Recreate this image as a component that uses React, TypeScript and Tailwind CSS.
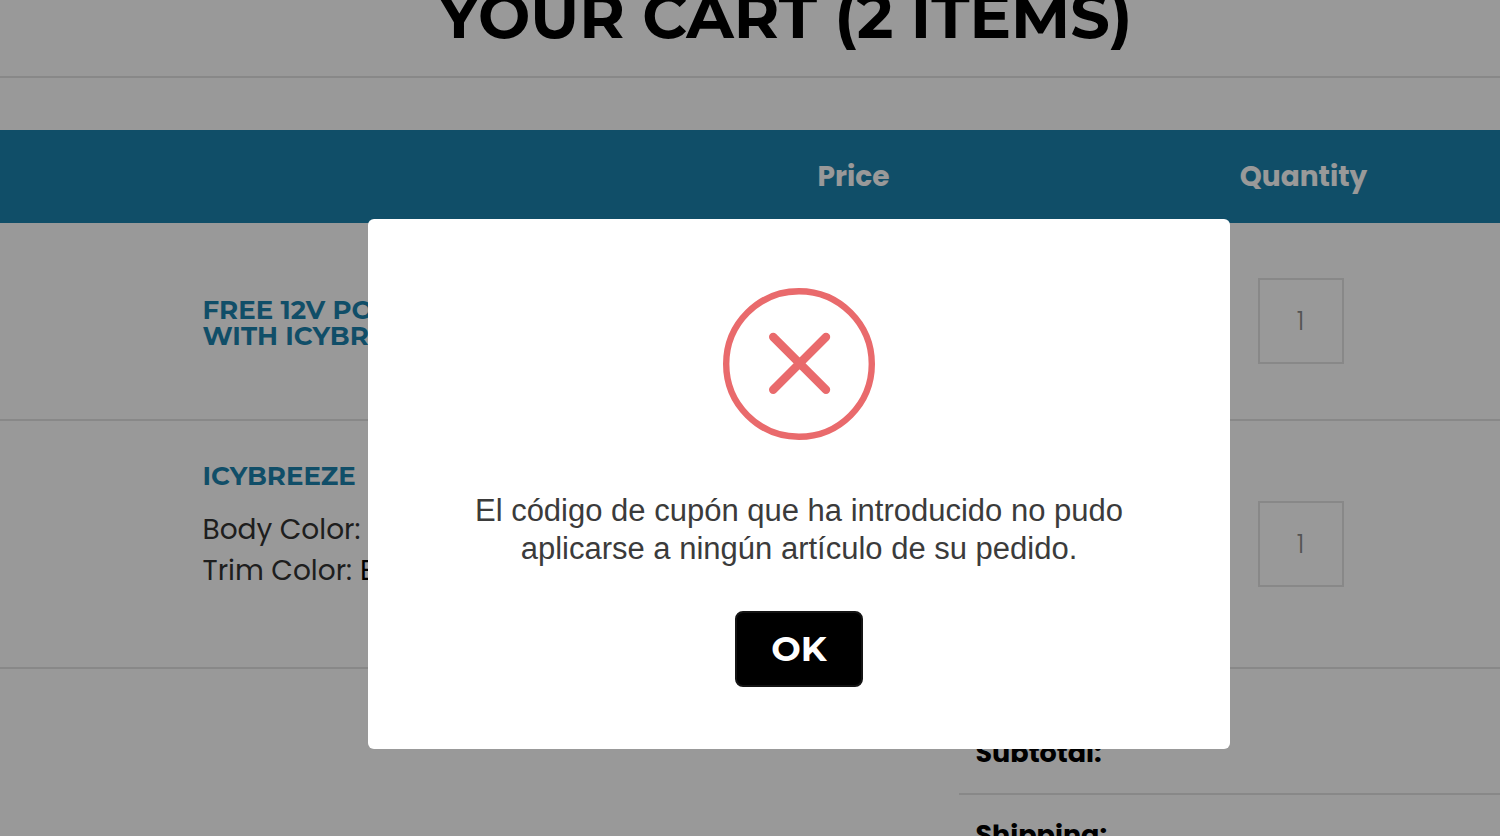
const HEADING = "font-['Montserrat','Inter',sans-serif]";
const BODY = "font-['Poppins','Inter',sans-serif]";

function QuantityBox({ id, label }: { id: string; label: string }) {
  return (
    <>
      <label htmlFor={id} className="sr-only">
        {label}
      </label>
      <input
        id={id}
        type="text"
        inputMode="numeric"
        defaultValue="1"
        className="mr-[6px] inline-block size-[86px] border-2 border-[#e3e3e3] bg-white text-center align-middle text-[26px] font-light text-[#8c8c8c]"
      />
    </>
  );
}

function ErrorIcon() {
  return (
    <svg viewBox="0 0 152 152" className="size-[152px]" fill="none" stroke="#e96a6c" aria-hidden="true">
      <circle cx="76" cy="76" r="72.8" strokeWidth="6.4" />
      <path d="M50.2 49 103 101.8M103 49 50.2 101.8" strokeWidth="8.4" strokeLinecap="round" />
    </svg>
  );
}

function CartTable() {
  return (
    <table className="w-full table-fixed border-collapse">
      <colgroup>
        <col className="w-[13.5%]" />
        <col className="w-[26.5%]" />
        <col className="w-[33.8%]" />
        <col />
      </colgroup>
      <thead>
        <tr className="h-[93px] bg-[#1b82ad] text-[28px] text-white">
          <td />
          <td />
          <th scope="col" className="font-bold">
            Price
          </th>
          <th scope="col" className="font-bold">
            Quantity
          </th>
        </tr>
      </thead>
      <tbody>
        <tr className="h-[197px] border-b-2 border-[#e3e3e3]">
          <td />
          <td className="pt-1">
            <a href="#product-1" className={`${HEADING} block text-[26px] leading-[26px] font-bold text-[#1b82ad]`}>
              FREE 12V POWER SUPPLY
              <br />
              WITH ICYBREEZE
            </a>
          </td>
          <td />
          <td className="text-center">
            <QuantityBox id="quantity-1" label="Quantity of free 12V power supply" />
          </td>
        </tr>
        <tr className="h-[248px] border-b-2 border-[#e3e3e3]">
          <td />
          <td className="pt-[42px] align-top">
            <a href="#product-2" className={`${HEADING} block text-[26px] leading-[26px] font-bold text-[#1b82ad]`}>
              ICYBREEZE
            </a>
            <dl className="mt-5 text-[28px] leading-[41px] text-[#333333]">
              <dt>Body Color:</dt>
              <div className="flex gap-2">
                <dt>Trim Color:</dt>
                <dd className="text-black">Black</dd>
              </div>
            </dl>
          </td>
          <td />
          <td className="text-center">
            <QuantityBox id="quantity-2" label="Quantity of IcyBreeze" />
          </td>
        </tr>
      </tbody>
    </table>
  );
}

export default function App() {
  return (
    <div className={`${BODY} h-screen overflow-hidden bg-white text-black`}>
      <main>
        <h1 className={`${HEADING} -mt-6 border-b-2 border-[#e3e3e3] pb-5 pl-[70px] text-center text-[62px] leading-[80px] font-bold`}>
          YOUR CART (2 ITEMS)
        </h1>
        <div className="pt-[52px]">
          <CartTable />
        </div>
        <dl className="mt-11 ml-auto w-[36.1%] text-[27px] leading-[80px] font-bold">
          <dt className="border-b-2 border-[#e3e3e3] pl-[17px]">Subtotal:</dt>
          <dt className="border-b-2 border-[#e3e3e3] pl-[17px]">Shipping:</dt>
        </dl>
      </main>

      <div className="fixed inset-0 flex items-center justify-center bg-black/40 pt-[132px] pl-[98px]">
        <div
          role="alertdialog"
          aria-modal="true"
          aria-describedby="dialog-message"
          className="flex w-[862px] max-w-full flex-col items-center rounded-md bg-white px-20 pt-[69px] pb-[62px]"
        >
          <ErrorIcon />
          <p
            id="dialog-message"
            className="mt-[52px] text-center font-['Liberation_Sans',Arial,sans-serif] text-[31px] leading-[38px] text-[#3b3b3b]"
          >
            El código de cupón que ha introducido no pudo aplicarse a ningún artículo de su pedido.
          </p>
          <button
            type="button"
            className={`${HEADING} mt-[43px] h-[76px] w-32 rounded-lg border-2 border-[#141414] bg-black text-[35px] font-bold text-white`}
          >
            OK
          </button>
        </div>
      </div>
    </div>
  );
}
